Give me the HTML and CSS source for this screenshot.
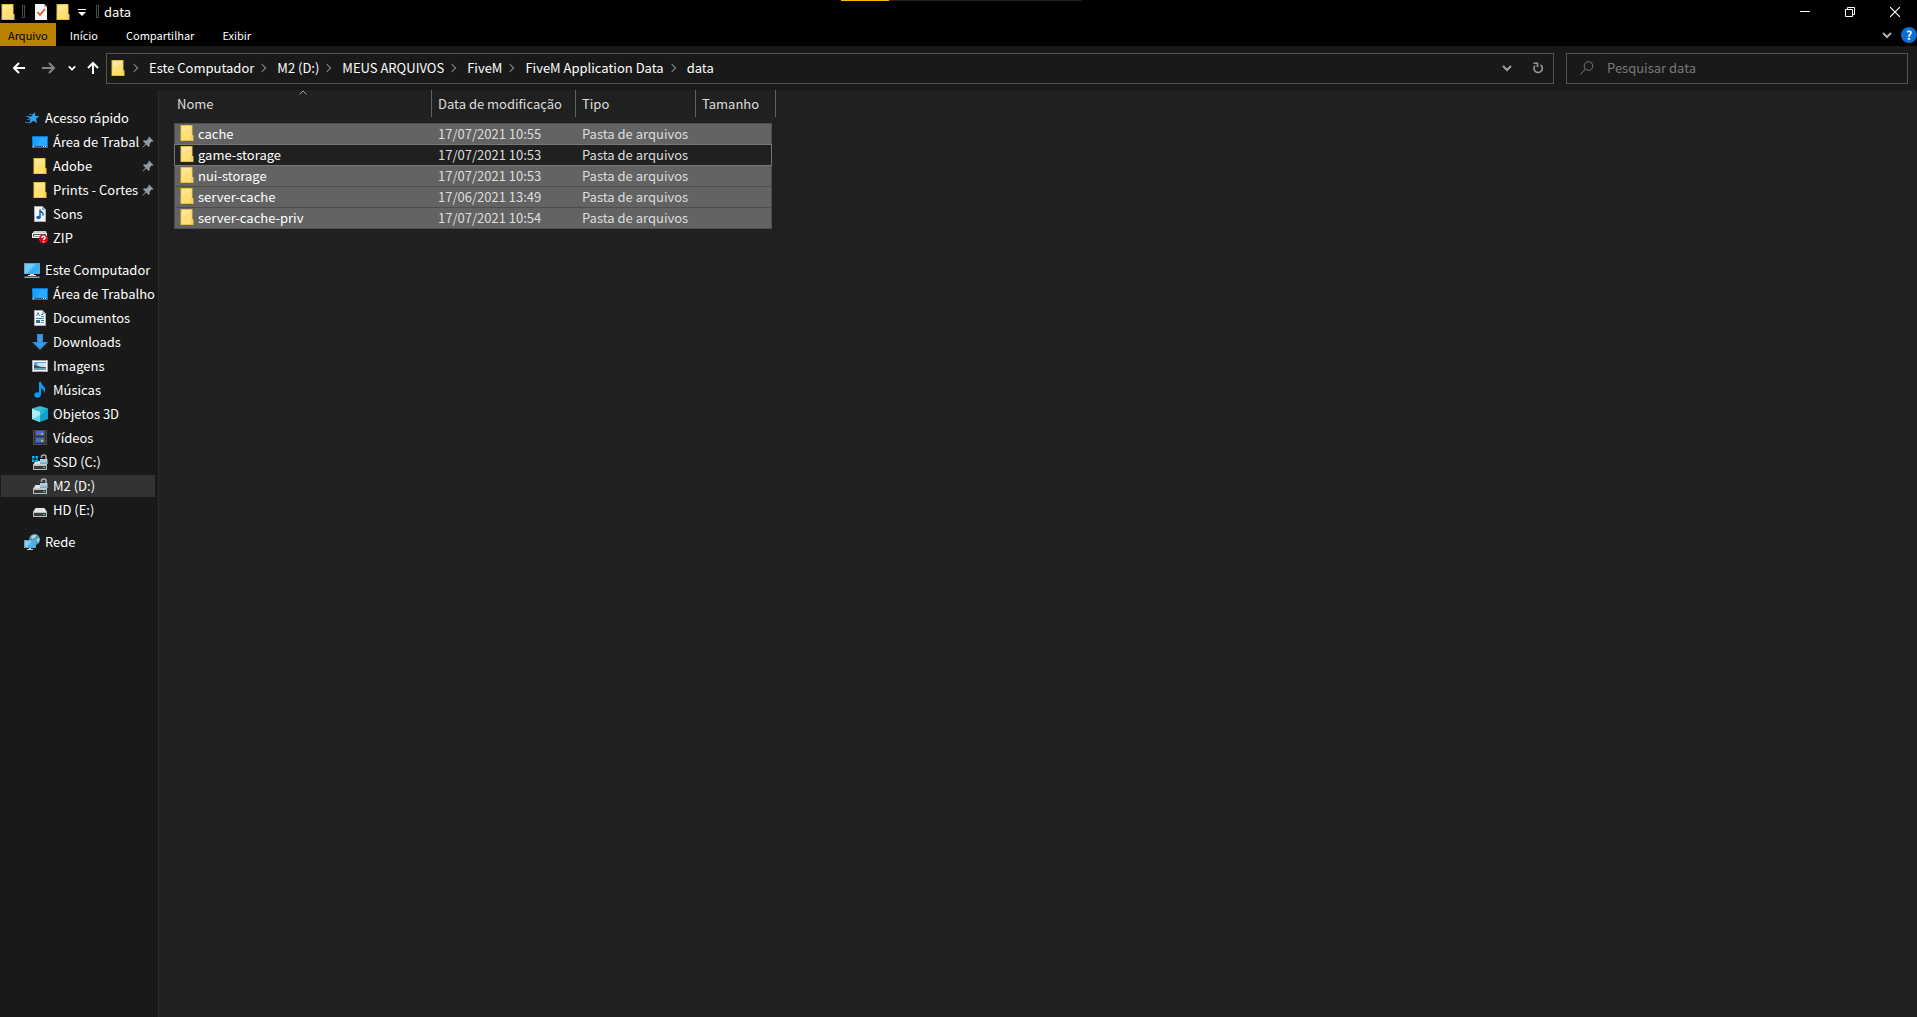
FILE: index.html
```html
<!DOCTYPE html>
<html lang="pt-BR">
<head>
    <meta charset="UTF-8">
    <meta name="viewport" content="width=device-width, initial-scale=1.0">
    <title>data</title>
    <link rel="stylesheet" href="styles.css">
</head>
<body>

<!-- icons used more than once -->
<svg class="sprite" aria-hidden="true">
    <symbol id="i-folder" viewBox="0 0 16 16">
        <path fill="#e8c03c" d="M1.500 0h12v10h1v6h-13z"/>
        <path fill="#ffe793" d="M2.500 1h10v9.500l-1 .5v4h-9z"/>
        <path fill="#ffdf76" d="M2.500 8l10-5v7.500l-1 .5v4h-9z"/>
        <path fill="#ffe48a" d="M12.500 11h1v4h-1z"/>
    </symbol>
    <symbol id="i-desktop" viewBox="0 0 16 16">
        <path fill="#0a78c8" d="M0 2h16v12H0z"/>
        <path fill="#1a9fff" d="M1 3h14v9H1z"/>
        <path fill="#2ba8ff" d="M9 3h6v9H4z"/>
        <path fill="#0a5da5" d="M1 12h14v1H1z"/>
        <path fill="#fff" d="M1 12h1v1H1zM11 12h1v1h-1zM13 12h1v1h-1z"/>
    </symbol>
    <symbol id="i-drive" viewBox="0 0 16 16">
        <path fill="#e4e6e8" d="M3.500 6h9l2.500 4H1z"/>
        <path fill="#b9bdc0" d="M1 10h14v5H1z"/>
        <path fill="#3a3d40" d="M2 11h12v3H2z"/>
        <path fill="#27e04a" d="M11 12h2v1h-2z"/>
    </symbol>
    <symbol id="i-drive-lock" viewBox="0 0 16 16">
        <path fill="#dfe2e4" d="M3.500 7h9l2.500 4H1z"/>
        <path fill="#b9bdc0" d="M1 10.500h14V16H1z"/>
        <path fill="#3a3d40" d="M2 12h12v3H2z"/>
        <path fill="#27e04a" d="M11 13h2v1h-2z"/>
        <path fill="none" stroke="#aab0b5" stroke-width="1.500" d="M9.500 4V3q0-2 2-2h.5q2 0 2 2v3"/>
        <path fill="#a9cfe3" d="M8 5h7.500v5H8z"/>
        <path fill="#7fa7bd" d="M8 8.500h7.500V10H8z"/>
    </symbol>
    <symbol id="i-pin" viewBox="0 0 12 12">
        <path fill="#8f9aa3" d="M7 .5L11.500 5l-1.200.7-.8-.2L7.500 8l.2 2.300-1 .7-2.500-2.500L1 11.500l-.5-.5 3-3.300L1 5.200l.8-1L4.200 4.500 6.500 2.500 6.300 1.500z"/>
    </symbol>
    <symbol id="i-chevron-down" viewBox="0 0 10 10">
        <path fill="none" stroke="currentColor" stroke-width="2" d="M1 3l4 4 4-4"/>
    </symbol>
</svg>

<div class="window">
    <div class="progress"><span></span></div>

    <header class="titlebar">
        <svg class="icon"><use href="#i-folder"/></svg>
        <span class="sep"></span>
        <button class="quick" aria-label="Propriedades">
            <svg class="icon" viewBox="0 0 16 16">
                <path fill="#f4f6f8" d="M2 0h9l3 3v13H2z"/>
                <path fill="#b8bec4" d="M11 0l3 3h-3z"/>
                <path fill="none" stroke="#e5511f" stroke-width="1.700" d="M4.500 8l2.500 3 5-6"/>
            </svg>
        </button>
        <button class="quick" aria-label="Nova pasta"><svg class="icon"><use href="#i-folder"/></svg></button>
        <button class="quick-more" aria-label="Personalizar">
            <svg width="8" height="8" viewBox="0 0 8 8"><path fill="#fff" d="M0 1h8v1H0zM0 4h8L4 8z"/></svg>
        </button>
        <span class="sep"></span>
        <h1>data</h1>
        <div class="window-buttons">
            <button aria-label="Minimizar"><svg width="10" height="10" viewBox="0 0 10 10"><path fill="#fff" d="M0 4h10v1H0z"/></svg></button>
            <button aria-label="Restaurar"><svg width="10" height="10" viewBox="0 0 10 10"><path fill="none" stroke="#fff" d="M.5 2.500h7v7h-7zM2.500 2.500v-2h7v7h-2"/></svg></button>
            <button aria-label="Fechar"><svg width="10" height="10" viewBox="0 0 10 10"><path fill="none" stroke="#fff" stroke-width="1.200" d="M0 0l10 10M10 0L0 10"/></svg></button>
        </div>
    </header>

    <nav class="ribbon">
        <button class="active">Arquivo</button>
        <button>Início</button>
        <button>Compartilhar</button>
        <button>Exibir</button>
        <div class="ribbon-end">
            <button aria-label="Expandir a faixa"><svg class="chev" width="10" height="10"><use href="#i-chevron-down"/></svg></button>
            <button class="help" aria-label="Ajuda">?</button>
        </div>
    </nav>

    <div class="navbar">
        <div class="arrows">
            <button aria-label="Voltar"><svg width="14" height="12" viewBox="0 0 14 12"><path fill="none" stroke="#fff" stroke-width="2" d="M13 6H2M7 1L2 6l5 5"/></svg></button>
            <button aria-label="Avançar"><svg width="14" height="12" viewBox="0 0 14 12"><path fill="none" stroke="#868686" stroke-width="2" d="M0 6h12M7 1l5 5-5 5"/></svg></button>
            <button class="recent" aria-label="Locais recentes"><svg width="8" height="8"><use href="#i-chevron-down"/></svg></button>
            <button class="up" aria-label="Acima"><svg width="12" height="14" viewBox="0 0 12 14"><path fill="none" stroke="#fff" stroke-width="2" d="M6 13V2M1 7l5-5 5 5"/></svg></button>
        </div>
        <div class="address">
            <svg class="icon"><use href="#i-folder"/></svg>
            <ol>
                <li><a href="#">Este Computador</a></li>
                <li><a href="#">M2 (D:)</a></li>
                <li><a href="#">MEUS ARQUIVOS</a></li>
                <li><a href="#">FiveM</a></li>
                <li><a href="#">FiveM Application Data</a></li>
                <li><a href="#">data</a></li>
            </ol>
            <button class="history" aria-label="Locais anteriores"><svg width="10" height="10"><use href="#i-chevron-down"/></svg></button>
            <button class="refresh" aria-label="Atualizar">
                <svg width="12" height="12" viewBox="0 0 12 12"><path fill="none" stroke="#959595" stroke-width="1.600" d="M8.500 2.800A4.200 4.200 0 1 1 3 3.500M1.500 1.300h4v4"/></svg>
            </button>
        </div>
        <label class="search">
            <svg width="14" height="14" viewBox="0 0 14 14"><circle cx="8.500" cy="5" r="4.300" fill="none" stroke="#777"/><path stroke="#777" d="M5.500 8L.5 13.500"/></svg>
            <input type="search" placeholder="Pesquisar data" aria-label="Pesquisar data">
        </label>
    </div>

    <div class="content">
        <aside class="sidebar">
            <ul>
                <li><a href="#">
                    <svg class="icon" viewBox="0 0 16 16"><path fill="#2ba4f2" d="M10.500 2l1 4 4 .3-3.500 2.500 1.200 4.500-3.700-2.500L5 14l1.500-4.800-3-2.500 4.200-.5z"/><path stroke="#1976b8" d="M5 4.500h4M2 6.500h3M3 9.500h3M1 12.500h4"/></svg>
                    <span>Acesso rápido</span></a></li>
                <li class="sub"><a href="#"><svg class="icon"><use href="#i-desktop"/></svg><span>Área de Trabal</span><svg class="pin"><use href="#i-pin"/></svg></a></li>
                <li class="sub"><a href="#"><svg class="icon"><use href="#i-folder"/></svg><span>Adobe</span><svg class="pin"><use href="#i-pin"/></svg></a></li>
                <li class="sub"><a href="#"><svg class="icon"><use href="#i-folder"/></svg><span>Prints - Cortes</span><svg class="pin"><use href="#i-pin"/></svg></a></li>
                <li class="sub"><a href="#">
                    <svg class="icon" viewBox="0 0 16 16"><path fill="#f2f4f6" stroke="#aab0b5" d="M2.500.5h8l3 3v12h-11z"/><path fill="#aab0b5" d="M10 0l4 4h-4z"/><ellipse cx="6.500" cy="11.500" rx="2.200" ry="1.800" fill="#1464a8"/><path fill="none" stroke="#1464a8" stroke-width="1.500" d="M8 11.500V3.500q0 2 2 3t.5 3"/></svg>
                    <span>Sons</span></a></li>
                <li class="sub"><a href="#">
                    <svg class="icon" viewBox="0 0 16 16"><path fill="#c9cccf" d="M2 1h12l1 3H0z"/><path fill="#ecebe9" d="M0 3h15v5H0z"/><path fill="#55585b" d="M1 4h13v2.500H1z"/><path fill="#e8e8e8" d="M2 5h7v1H2z"/><circle cx="11.500" cy="9" r="4.500" fill="#e00b14"/><path fill="none" stroke="#fff" stroke-width="1.400" d="M10 8q0-1.700 1.600-1.700T13.100 7.800q0 .8-.9 1.200-.6.300-.6 1"/><path fill="#fff" d="M10.900 11h1.400v1.200h-1.400z"/></svg>
                    <span>ZIP</span></a></li>
            </ul>
            <ul>
                <li><a href="#">
                    <svg class="icon" viewBox="0 0 16 16"><path fill="#6e9fbe" d="M0 1h16v11H0z"/><path fill="#35b0f5" d="M1 2h14v9H1z"/><path fill="#74caf8" d="M1 2h11L3 11H1z"/><path fill="#d5dde2" d="M6 12h4v1H6zM4 13h8v1H4z"/><path fill="#8fa4b3" d="M1 14.500h14l1 1.500H0z"/></svg>
                    <span>Este Computador</span></a></li>
                <li class="sub"><a href="#"><svg class="icon"><use href="#i-desktop"/></svg><span>Área de Trabalho</span></a></li>
                <li class="sub"><a href="#">
                    <svg class="icon" viewBox="0 0 16 16"><path fill="#f8f9fa" stroke="#aab0b5" d="M2.500.5h8l3 3v12h-11z"/><path fill="#aab0b5" d="M10 0l4 4h-4z"/><path fill="none" stroke="#2688c9" d="M4.500 6l1.500-3.500L7.500 6M9 4.500h2"/><path stroke="#2688c9" d="M9 6.500h3M4 8.500h8M9 10.500h3"/><path fill="#4c6575" d="M4 10h4v3H4z"/><path stroke="#7f8a92" d="M9 12.500h3"/></svg>
                    <span>Documentos</span></a></li>
                <li class="sub"><a href="#">
                    <svg class="icon" viewBox="0 0 16 16"><path fill="#2f88d8" d="M5 0h6v8h5l-8 8-8-8h5z"/><path fill="#4099e6" d="M6 1h4v8h3l-5 5-5-5h3z"/></svg>
                    <span>Downloads</span></a></li>
                <li class="sub"><a href="#">
                    <svg class="icon" viewBox="0 0 16 16"><path fill="#a8a8a4" d="M0 2h16v12H0z"/><path fill="#fff" d="M1 3h14v10H1z"/><path fill="#5aa7ec" d="M2 4h12v4H2z"/><path fill="#c9e4fa" d="M6 5h8v3H4z"/><path fill="#2d5e5c" d="M2 7q4 0 6 1.500l6 .5v1H2z"/><path fill="#6a9dbb" d="M2 10h12v2H2z"/></svg>
                    <span>Imagens</span></a></li>
                <li class="sub"><a href="#">
                    <svg class="icon" viewBox="0 0 16 16"><ellipse cx="5.500" cy="13" rx="3.200" ry="2.700" fill="#0c9cf5"/><path fill="#0c9cf5" d="M7 0h2q.3 2.500 2.500 4.200 3 2.600.5 7.300.5-4-3-5v6.500H7z"/></svg>
                    <span>Músicas</span></a></li>
                <li class="sub"><a href="#">
                    <svg class="icon" viewBox="0 0 16 16"><path fill="#3cb9d4" d="M8 0l8 2.500-8 3-8-3z"/><path fill="#a9eef2" d="M0 2.500l8 3V16l-8-3z"/><path fill="#63d6e4" d="M0 13l8-4v7z"/><path fill="#13a0c8" d="M16 2.500l-8 3V16l8-3z"/><path fill="#22c0dd" d="M16 2.500L8 10V5.500z"/></svg>
                    <span>Objetos 3D</span></a></li>
                <li class="sub"><a href="#">
                    <svg class="icon" viewBox="0 0 16 16"><path fill="#4b4b4b" d="M1 0h14v15H1z"/><path stroke="#151515" stroke-dasharray="1 1" stroke-width="1" d="M2.500 1v14M13.500 1v14"/><path fill="#3d6fd0" d="M4 1h8v6H4zM4 8h8v6H4z"/><path fill="#e0a62c" d="M9 3h2v2H9zM9 10h2v2H9z"/><path fill="#c0497c" d="M5 3h2v2H5z"/><path fill="#203070" d="M4 5.500h8V7H4zM4 12.500h8V14H4z"/></svg>
                    <span>Vídeos</span></a></li>
                <li class="sub"><a href="#">
                    <svg class="icon" viewBox="0 0 16 16"><use href="#i-drive-lock"/><path fill="#00b7f0" d="M0 2h2.500v2.500H0zM3.500 2H6v2.500H3.500zM0 5.500h2.500V8H0zM3.500 5.500H6V8H3.500z"/></svg>
                    <span>SSD (C:)</span></a></li>
                <li class="sub selected"><a href="#"><svg class="icon"><use href="#i-drive-lock"/></svg><span>M2 (D:)</span></a></li>
                <li class="sub"><a href="#"><svg class="icon"><use href="#i-drive"/></svg><span>HD (E:)</span></a></li>
            </ul>
            <ul>
                <li><a href="#">
                    <svg class="icon" viewBox="0 0 16 16"><circle cx="10.500" cy="5.500" r="5.500" fill="#4f93b5"/><path fill="#a5d3e6" d="M7 2.500q3-3 6-1.500l-2 3-3 1zM12 5l3-1q1 3-1 5z"/><path fill="#6e9fbe" d="M0 6h12v8H0z"/><path fill="#45b2f5" d="M1 7h10v6H1z"/><path fill="#83cdf9" d="M1 7h7l-5 6H1z"/><path fill="#c5d0d7" d="M5 14h2v1H5zM3 15h6v1H3z"/></svg>
                    <span>Rede</span></a></li>
            </ul>
        </aside>

        <main class="files">
            <table>
                <colgroup>
                    <col class="c-name"><col class="c-date"><col class="c-type"><col class="c-size"><col class="c-end">
                </colgroup>
                <thead>
                    <tr>
                        <th>Nome
                            <svg class="sort" width="8" height="5" viewBox="0 0 8 5"><path fill="none" stroke="#a0a0a0" d="M.5 4.500L4 1l3.500 3.500"/></svg>
                        </th>
                        <th>Data de modificação</th>
                        <th>Tipo</th>
                        <th colspan="2">Tamanho</th>
                    </tr>
                </thead>
                <tbody>
                    <tr>
                        <td><svg class="icon"><use href="#i-folder"/></svg>cache</td>
                        <td>17/07/2021 10:55</td>
                        <td>Pasta de arquivos</td>
                        <td></td>
                    </tr>
                    <tr class="focused">
                        <td><svg class="icon"><use href="#i-folder"/></svg>game-storage</td>
                        <td>17/07/2021 10:53</td>
                        <td>Pasta de arquivos</td>
                        <td></td>
                    </tr>
                    <tr>
                        <td><svg class="icon"><use href="#i-folder"/></svg>nui-storage</td>
                        <td>17/07/2021 10:53</td>
                        <td>Pasta de arquivos</td>
                        <td></td>
                    </tr>
                    <tr>
                        <td><svg class="icon"><use href="#i-folder"/></svg>server-cache</td>
                        <td>17/06/2021 13:49</td>
                        <td>Pasta de arquivos</td>
                        <td></td>
                    </tr>
                    <tr>
                        <td><svg class="icon"><use href="#i-folder"/></svg>server-cache-priv</td>
                        <td>17/07/2021 10:54</td>
                        <td>Pasta de arquivos</td>
                        <td></td>
                    </tr>
                </tbody>
            </table>
        </main>
    </div>
</div>

</body>
</html>
```
FILE: styles.css
```css
* {
    box-sizing: border-box;
}

body {
    margin: 0;
    background-color: #202020;
    color: #ffffff;
    font-family: "Noto Sans CJK JP", "Noto Sans", sans-serif;
    font-size: 13px;
    line-height: 20px;
}

button {
    display: flex;
    align-items: center;
    justify-content: center;
    padding: 0;
    border: 0;
    background: none;
    color: inherit;
    font: inherit;
}

a {
    color: inherit;
    text-decoration: none;
}

ul, ol {
    margin: 0;
    padding: 0;
    list-style: none;
}

svg {
    flex: none;
    display: block;
}

.sprite {
    display: none;
}

.icon {
    width: 16px;
    height: 16px;
}

.window {
    display: flex;
    flex-direction: column;
    min-height: 100vh;
}

/* thin bar over the top edge */
.progress {
    position: absolute;
    top: 0;
    left: 50%;
    width: 241px;
    height: 1px;
    margin-left: -118px;
    background-color: #202020;
}

.progress span {
    display: block;
    width: 20%;
    height: 1px;
    background-color: #ffb900;
}

/* title bar */
.titlebar {
    display: flex;
    align-items: center;
    height: 23px;
    background-color: #000000;
}

.sep {
    width: 3px;
    height: 13px;
    margin: 0 5px 0 6px;
    border: 1px solid #4a4a4a;
}

.quick {
    width: 22px;
}

.quick-more {
    width: 16px;
}

.titlebar h1 {
    margin: 0;
    font-size: 13px;
    font-weight: normal;
}

.window-buttons {
    display: flex;
    margin-left: auto;
}

.window-buttons button {
    width: 45px;
    height: 20px;
}

/* ribbon tabs */
.ribbon {
    display: flex;
    height: 23px;
    background-color: #000000;
    font-size: 11px;
}

.ribbon > button {
    padding: 0 14px;
}

.ribbon > .active {
    padding: 0 8px;
    background-color: #b98200;
    color: #000000;
}

.ribbon-end {
    display: flex;
    align-items: center;
    gap: 9px;
    margin-left: auto;
    color: #b0b0b0;
}

.help {
    width: 16px;
    height: 16px;
    border-radius: 50%;
    background-color: #0a6fd0;
    color: #ffffff;
    font-size: 12px;
    font-weight: bold;
    line-height: 16px;
}

/* navigation bar */
.navbar {
    display: flex;
    align-items: center;
    height: 44px;
    padding: 0 9px 0 12px;
    background-color: #191919;
}

.arrows {
    display: flex;
    align-items: center;
    width: 94px;
}

.arrows button {
    width: 14px;
    margin-right: 16px;
}

.arrows .recent {
    width: 8px;
    margin: 0 11px 0 -4px;
}

.arrows .up {
    width: 12px;
    margin: 0;
}

.address {
    flex: 1;
    display: flex;
    align-items: center;
    height: 31px;
    margin-right: 12px;
    padding-left: 3px;
    border: 1px solid #535353;
}

.address ol {
    display: flex;
    flex: 1;
}

.address li {
    display: flex;
    align-items: center;
}

.address li::before {
    content: "";
    width: 5px;
    height: 5px;
    margin: 0 12px 0 5px;
    border: solid #8a8a8a;
    border-width: 1px 1px 0 0;
    transform: rotate(45deg);
}

.address .history {
    width: 30px;
    height: 29px;
    color: #a0a0a0;
}

.address .refresh {
    width: 31px;
    height: 29px;
    border-left: 1px solid #141414;
}

.search {
    display: flex;
    align-items: center;
    width: 342px;
    height: 31px;
    padding: 0 13px;
    border: 1px solid #535353;
}

.search input {
    flex: 1;
    min-width: 0;
    margin-left: 13px;
    padding: 0;
    border: 0;
    outline: 0;
    background: none;
    color: #ffffff;
    font: inherit;
}

.search input::placeholder {
    color: #787878;
    opacity: 1;
}

/* body */
.content {
    flex: 1;
    display: flex;
}

.sidebar {
    width: 159px;
    padding: 17px 3px 16px 1px;
    border-right: 1px solid #2b2b2b;
    background-color: #191919;
}

.sidebar ul {
    margin-bottom: 10px;
}

.sidebar li {
    height: 22px;
    margin-bottom: 2px;
    padding-left: 23px;
}

.sidebar .sub {
    padding-left: 31px;
}

.sidebar .selected {
    background-color: #333333;
}

.sidebar a {
    display: flex;
    align-items: center;
    height: 22px;
}

.sidebar span {
    flex: 1;
    margin-left: 5px;
    white-space: nowrap;
}

.pin {
    width: 12px;
    height: 12px;
    margin-right: 1px;
}

.files {
    flex: 1;
    padding-left: 15px;
}

table {
    width: 602px;
    table-layout: fixed;
    border-spacing: 0;
}

.c-name {
    width: 258px;
}

.c-date {
    width: 144px;
}

.c-type {
    width: 120px;
}

.c-size {
    width: 76px;
}

.c-end {
    width: 4px;
}

th {
    position: relative;
    height: 27px;
    padding: 0 0 0 6px;
    border-right: 1px solid #636363;
    color: #dedede;
    font-weight: normal;
    text-align: left;
}

th:first-child {
    padding-left: 3px;
}

.sort {
    position: absolute;
    top: 0;
    left: 50%;
    transform: translateX(-50%);
}

/* gap between the header and the first row */
tbody::before {
    content: "";
    display: block;
    height: 6px;
}

td {
    height: 21px;
    padding: 0 0 0 6px;
    border-top: 1px solid #4d4d4d;
    background-color: #636363;
    color: #dedede;
    white-space: nowrap;
}

td:first-child {
    padding-left: 4px;
    border-left: 1px solid #4d4d4d;
    color: #ffffff;
}

td:nth-child(4) {
    border-right: 1px solid #4d4d4d;
}

td .icon {
    float: left;
    margin: 1px 3px 0 0;
}

.focused td {
    border-color: #777777;
    background-color: #202020;
}

.focused + tr td {
    border-top-color: #777777;
}

tbody tr:last-child td {
    height: 22px;
    border-bottom: 1px solid #4d4d4d;
}
```
